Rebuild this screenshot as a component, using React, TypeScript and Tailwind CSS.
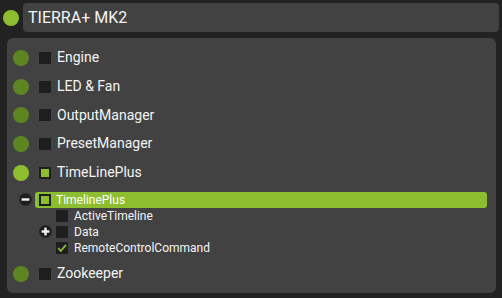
import React from "react";

const modules = [
  { name: "Engine", active: false },
  { name: "LED & Fan", active: false },
  { name: "OutputManager", active: false },
  { name: "PresetManager", active: false },
  { name: "TimeLinePlus", active: true },
];

function Dot({ active }: { active: boolean }) {
  return (
    <span
      className={`block w-4 h-4 rounded-full shrink-0 ${
        active ? "bg-[#8dbe2f]" : "bg-[#5d8622]"
      }`}
    />
  );
}

function Box({ filled, checked }: { filled?: boolean; checked?: boolean }) {
  if (filled)
    return (
      <span className="block w-3 h-3 shrink-0 bg-[#1e1e1e] p-[2px]">
        <span className="block w-full h-full bg-[#8dbe2f]" />
      </span>
    );
  return (
    <span className="flex items-center justify-center w-3 h-3 shrink-0 bg-[#1e1e1e]">
      {checked && (
        <svg width="12" height="12" viewBox="0 0 12 12">
          <polyline
            points="2.2,6.2 4.8,9 10,2.8"
            fill="none"
            stroke="#8dbe2f"
            strokeWidth="1.8"
          />
        </svg>
      )}
    </span>
  );
}

function Toggle({ open }: { open: boolean }) {
  return (
    <svg width="13" height="13" viewBox="0 0 13 13" className="shrink-0">
      <circle cx="6.5" cy="6.5" r="6.2" fill="#1e1e1e" stroke="#2c2c2c" strokeWidth="0.6" />
      <rect x="2.6" y="5.3" width="7.8" height="2.4" fill="#f4f4f4" />
      {!open && <rect x="5.3" y="2.6" width="2.4" height="7.8" fill="#f4f4f4" />}
    </svg>
  );
}

function ModuleRow({ name, active }: { name: string; active: boolean }) {
  return (
    <div className="flex items-center h-[28.7px] pl-[6px]">
      <Dot active={active} />
      <span className="ml-[10px]">
        <Box filled={active} />
      </span>
      <span className="ml-[6px] text-[14px] text-[#f4f4f4]">{name}</span>
    </div>
  );
}

const children = [
  { name: "ActiveTimeline", expandable: false, checked: false },
  { name: "Data", expandable: true, checked: false },
  { name: "RemoteControlCommand", expandable: false, checked: true },
];

export default function App() {
  return (
    <div
      className="w-[502px] h-[298px] bg-[#222222] overflow-hidden"
      style={{ fontFamily: "Roboto, 'Liberation Sans', sans-serif" }}
    >
      <div className="flex items-center pt-[3px] pl-[3px] pr-[3px]">
        <Dot active />
        <div className="ml-[4px] flex-1 h-[29px] rounded-[4px] bg-[#424242] flex items-center pl-[5px] text-[16px] text-[#f4f4f4]">
          TIERRA+ MK2
        </div>
      </div>

      <div className="mt-[6px] ml-[7px] mr-[6px] h-[255px] rounded-[6px] bg-[#424242] pt-[5.5px] flex flex-col">
        {modules.map((m) => (
          <ModuleRow key={m.name} name={m.name} active={m.active} />
        ))}

        <div className="mt-[5px] flex flex-col">
          <div className="flex items-center h-4 pl-[11.5px] pr-[9px]">
            <Toggle open />
            <div className="ml-[3.5px] flex-1 h-4 rounded-[3px] bg-[#8dbe2f] flex items-center pl-[4px]">
              <Box filled />
              <span className="ml-[5px] text-[12px] text-white">TimelinePlus</span>
            </div>
          </div>
          {children.map((c) => (
            <div key={c.name} className="flex items-center h-4 pl-[32px]">
              <span className="w-3 flex items-center justify-center">
                {c.expandable && <Toggle open={false} />}
              </span>
              <span className="ml-[5px]">
                <Box checked={c.checked} />
              </span>
              <span className="ml-[6px] text-[12px] text-[#f4f4f4]">{c.name}</span>
            </div>
          ))}
        </div>

        <div className="mt-[3.6px]">
          <ModuleRow name="Zookeeper" active={false} />
        </div>
      </div>
    </div>
  );
}
